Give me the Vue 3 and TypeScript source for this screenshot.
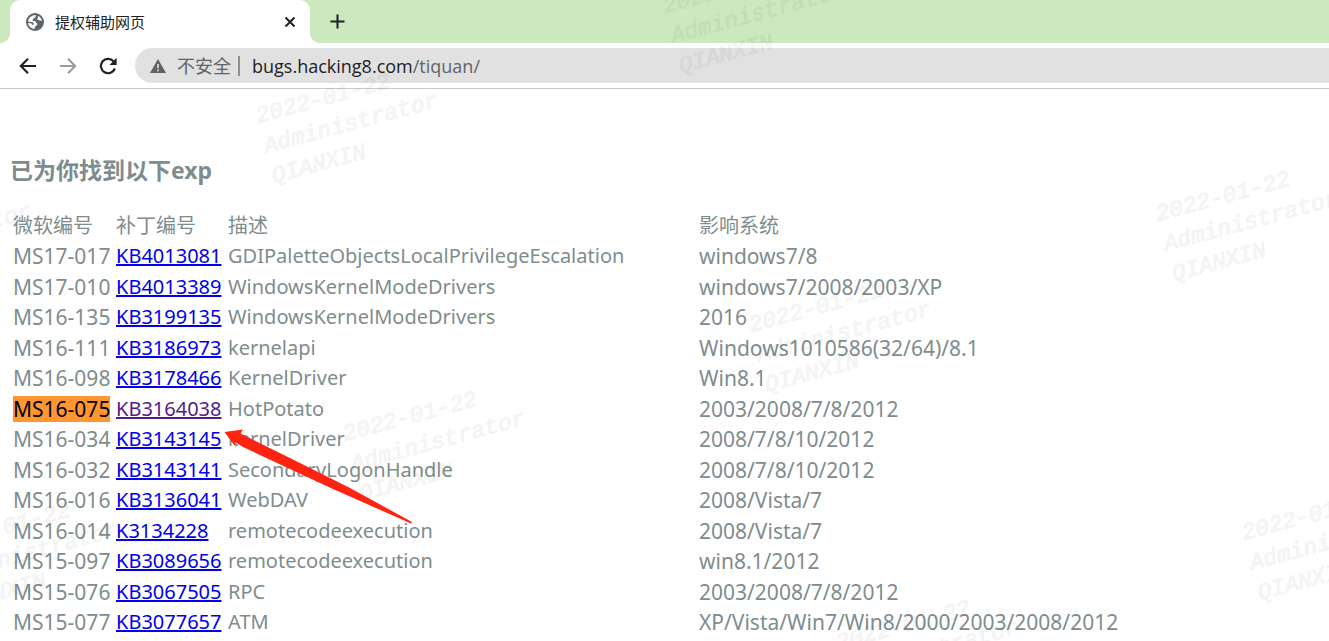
<script setup lang="ts">
interface Exploit {
  id: string
  kb: string
  description: string
  systems: string
  marked?: boolean
}

const exploits: Exploit[] = [
  { id: 'MS17-017', kb: 'KB4013081', description: 'GDIPaletteObjectsLocalPrivilegeEscalation', systems: 'windows7/8' },
  { id: 'MS17-010', kb: 'KB4013389', description: 'WindowsKernelModeDrivers', systems: 'windows7/2008/2003/XP' },
  { id: 'MS16-135', kb: 'KB3199135', description: 'WindowsKernelModeDrivers', systems: '2016' },
  { id: 'MS16-111', kb: 'KB3186973', description: 'kernelapi', systems: 'Windows1010586(32/64)/8.1' },
  { id: 'MS16-098', kb: 'KB3178466', description: 'KernelDriver', systems: 'Win8.1' },
  { id: 'MS16-075', kb: 'KB3164038', description: 'HotPotato', systems: '2003/2008/7/8/2012', marked: true },
  { id: 'MS16-034', kb: 'KB3143145', description: 'kernelDriver', systems: '2008/7/8/10/2012' },
  { id: 'MS16-032', kb: 'KB3143141', description: 'SecondaryLogonHandle', systems: '2008/7/8/10/2012' },
  { id: 'MS16-016', kb: 'KB3136041', description: 'WebDAV', systems: '2008/Vista/7' },
  { id: 'MS16-014', kb: 'K3134228', description: 'remotecodeexecution', systems: '2008/Vista/7' },
  { id: 'MS15-097', kb: 'KB3089656', description: 'remotecodeexecution', systems: 'win8.1/2012' },
  { id: 'MS15-076', kb: 'KB3067505', description: 'RPC', systems: '2003/2008/7/8/2012' },
  { id: 'MS15-077', kb: 'KB3077657', description: 'ATM', systems: 'XP/Vista/Win7/Win8/2000/2003/2008/2012' },
]

const stampLines = ['2022-01-22', 'Administrator', 'QIANXIN']
const stamps = [
  { x: 665, y: 13 },
  { x: 258, y: 123 },
  { x: -149, y: 234 },
  { x: 1158, y: 221 },
  { x: 751, y: 332 },
  { x: 345, y: 441 },
  { x: -62, y: 552 },
  { x: 1244, y: 540 },
  { x: 838, y: 650 },
]
</script>

<template>
  <div class="window">
    <header>
      <div class="tab-strip">
        <div class="tab">
          <svg class="globe" viewBox="0 0 18 18" aria-hidden="true">
            <circle cx="9" cy="9" r="9" fill="#5f6368" />
            <path d="M9.500 2 C10.200 3.200 9.800 4.200 8.800 4.500 C8 4.800 8.100 5.700 7.400 6.100 C6.600 6.600 6.300 7.100 6.800 7.700 C7.500 8.200 8.900 7.900 9.600 8.500 C10.200 9.100 9.900 9.900 10.700 10.200 C11.500 10.400 11.800 11.100 11.200 11.800 C10.600 12.500 9.700 12.700 9.300 13.500 C9 14.300 9 15.200 8.400 16 C5 15.700 2.300 13 2 9.800 C2.900 10.300 4 10.300 4.900 10.300 C5.800 10.400 5.500 11.700 6.500 11.900 C7.500 12 8 11 7.600 10.200 C7.100 9.300 6.200 9.300 5 9.100 C3.800 8.900 2.800 8.900 2 8.300 C2.600 4.800 5.700 2.200 9.500 2 Z" fill="#fff" />
            <path d="M11.800 2.700 C13.800 3.600 15.500 5.400 15.900 7.600 C14.900 8.200 14 7.300 13.200 7.300 C12.200 7.300 11.300 6.900 11.300 6.100 C11.300 5.200 12.500 4.900 12.300 4.100 C12.200 3.600 11.700 3.300 11.800 2.700 Z" fill="#fff" />
          </svg>
          <span class="tab-title">提权辅助网页</span>
          <button class="icon-button tab-close" type="button" aria-label="关闭">
            <svg viewBox="0 0 12 12"><path d="M1.500 1.500 L10.500 10.500 M10.500 1.500 L1.500 10.500" stroke="#202124" stroke-width="2" fill="none" /></svg>
          </button>
        </div>
        <button class="icon-button new-tab" type="button" aria-label="新标签页">
          <svg viewBox="0 0 16 16"><path d="M8 0.500 V15.500 M0.500 8 H15.500" stroke="#202124" stroke-width="2.200" fill="none" /></svg>
        </button>
      </div>
      <div class="toolbar">
        <nav class="nav-buttons">
          <button class="icon-button nav" type="button" aria-label="后退">
            <svg viewBox="0 0 18 18"><path d="M17 9 H2 M9 1.800 L1.800 9 L9 16.200" stroke="#202124" stroke-width="2.100" fill="none" /></svg>
          </button>
          <button class="icon-button nav" type="button" aria-label="前进">
            <svg viewBox="0 0 18 18"><path d="M1 9 H16 M9 1.800 L16.200 9 L9 16.200" stroke="#9b9c9e" stroke-width="2.100" fill="none" /></svg>
          </button>
          <button class="icon-button nav" type="button" aria-label="重新加载">
            <svg viewBox="0 0 18 18">
              <path d="M15.900 11.500 A7.200 7.200 0 1 1 14.500 4.200" stroke="#202124" stroke-width="2.200" fill="none" />
              <path d="M17.600 0.800 V7.900 H10.500 Z" fill="#202124" />
            </svg>
          </button>
        </nav>
        <div class="omnibox">
          <svg class="warning" viewBox="0 0 16 14" aria-hidden="true">
            <path d="M8 0 L16 14 H0 Z" fill="#5f6368" />
            <path d="M8 5 V9.300 M8 10.500 V12.200" stroke="#e1e1e1" stroke-width="1.600" />
          </svg>
          <span class="insecure">不安全</span>
          <span class="divider"></span>
          <label class="host" for="address">bugs.hacking8.com</label>
          <input id="address" class="path" type="text" value="/tiquan/" />
        </div>
      </div>
    </header>

    <main>
      <h3>已为你找到以下exp</h3>
      <table>
        <colgroup>
          <col class="col-id" />
          <col class="col-kb" />
          <col class="col-description" />
          <col />
        </colgroup>
        <tbody>
          <tr>
            <td>微软编号</td>
            <td>补丁编号</td>
            <td>描述</td>
            <td>影响系统</td>
          </tr>
          <tr v-for="item in exploits" :key="item.id">
            <td class="numeric"><mark v-if="item.marked">{{ item.id }}</mark><template v-else>{{ item.id }}</template></td>
            <td><a href="#" :class="{ seen: item.marked }">{{ item.kb }}</a></td>
            <td>{{ item.description }}</td>
            <td class="numeric">{{ item.systems }}</td>
          </tr>
        </tbody>
      </table>
    </main>

    <svg class="overlay" aria-hidden="true">
      <g v-for="(stamp, i) in stamps" :key="i" class="stamp" :transform="`translate(${stamp.x} ${stamp.y}) rotate(-15)`">
        <text v-for="(line, n) in stampLines" :key="line" x="0" :y="n * 31">{{ line }}</text>
      </g>
      <path d="M224.500 432 L243 429.600 L240.500 433.500 L300 463 L350 488 L412 522 L411 523.500 L333 489 L243 447 L234.500 441.500 L236 447.500 Z" fill="#ff2312" />
    </svg>
  </div>
</template>

<style>
body {
  margin: 0;
  background: #fff;
}
</style>

<style scoped>
.window {
  position: relative;
  min-height: 100vh;
  overflow: hidden;
  background: #fff;
  color: #7f8c8d;
  font-family: "Noto Sans", "Noto Sans CJK SC", sans-serif;
  font-size: 20px;
}

.icon-button {
  display: flex;
  padding: 0;
  border: 0;
  background: none;
}

.tab-strip {
  display: flex;
  align-items: center;
  height: 43px;
  padding-left: 10px;
  background: #cbe8bf;
}

.tab {
  position: relative;
  display: flex;
  align-items: center;
  box-sizing: border-box;
  width: 300px;
  height: 43px;
  padding: 0 14px 0 16px;
  border-radius: 10px 10px 0 0;
  background: #fff;
}

.tab::before,
.tab::after {
  content: "";
  position: absolute;
  bottom: 0;
  width: 10px;
  height: 10px;
}

.tab::before {
  right: 100%;
  background: radial-gradient(circle at 0 0, #cbe8bf 10px, #fff 10px);
}

.tab::after {
  left: 100%;
  background: radial-gradient(circle at 100% 0, #cbe8bf 10px, #fff 10px);
}

.globe {
  width: 18px;
  height: 18px;
}

.tab-title {
  flex: 1;
  margin-left: 11px;
  color: #202124;
  font-size: 15px;
  line-height: 20px;
}

.tab-close svg {
  width: 12px;
  height: 12px;
}

.new-tab {
  margin-left: 20px;
}

.new-tab svg {
  width: 15px;
  height: 15px;
}

.toolbar {
  display: flex;
  align-items: center;
  height: 45px;
  border-bottom: 1px solid #c8c8c8;
}

.nav-buttons {
  display: flex;
  gap: 22px;
  padding: 0 18px 0 19px;
}

.nav svg {
  width: 18px;
  height: 18px;
}

.omnibox {
  display: flex;
  flex: 1;
  align-items: center;
  height: 35px;
  padding-left: 15px;
  border-radius: 18px 0 0 18px;
  background: #e1e1e1;
  font-family: "Open Sans", "Noto Sans CJK SC", sans-serif;
  font-size: 18px;
  line-height: 24px;
}

.warning {
  width: 16px;
  height: 14px;
}

.insecure {
  margin-left: 11px;
  color: #5f6368;
}

.divider {
  width: 2px;
  height: 20px;
  margin: 0 12px 0 7px;
  background: #8e8f90;
}

.host {
  color: #202124;
}

.path {
  flex: 1;
  min-width: 0;
  padding: 0;
  border: 0;
  outline: 0;
  background: none;
  color: #5f6368;
  font: inherit;
}

main {
  padding: 63px 10px 0;
}

h3 {
  margin: 0 0 21px;
  font-size: 23px;
  line-height: 36px;
}

table {
  width: 100%;
  table-layout: fixed;
  border-spacing: 2px;
}

.col-id {
  width: 101px;
}

.col-kb {
  width: 110px;
}

.col-description {
  width: 469px;
}

td {
  height: 28px;
  padding: 0 1px;
  line-height: 28px;
  white-space: nowrap;
}

tr:nth-child(odd) td {
  height: 29px;
}

.numeric {
  font-size: 21px;
}

mark {
  display: inline-block;
  background: #ff9632;
  color: #000;
  line-height: 26px;
}

a {
  color: #0000ee;
  text-decoration: underline;
}

.seen {
  color: #551a8b;
}

.overlay {
  position: absolute;
  inset: 0;
  width: 100%;
  height: 100%;
  pointer-events: none;
}

.stamp {
  fill: #000;
  stroke: #000;
  stroke-width: 1px;
  opacity: 0.04;
  font-family: "Liberation Mono", monospace;
  font-size: 23px;
  font-style: italic;
}
</style>
